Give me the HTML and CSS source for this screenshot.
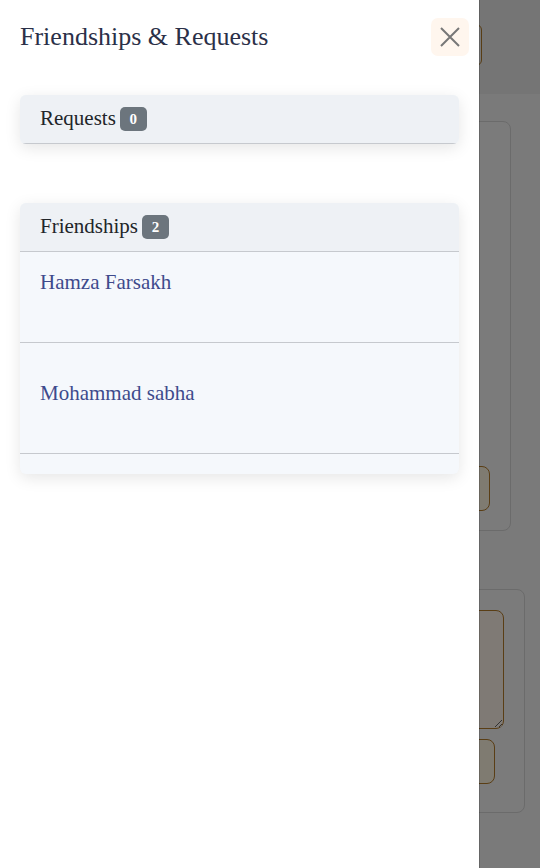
FILE: index.html
```html
<!DOCTYPE html>
<html lang="en">
<head>
<meta charset="utf-8">
<title>Friendships &amp; Requests</title>
<link rel="stylesheet" href="styles.css">
</head>
<body>
<div class="page">
  <header class="nav"><span class="nav-btn"></span></header>
  <main class="main">
    <section class="bg-card bg-card-one">
      <span class="bg-btn bg-btn-one"></span>
    </section>
    <section class="bg-card bg-card-two">
      <textarea class="bg-textarea" readonly></textarea>
      <span class="bg-btn bg-btn-two">Post</span>
    </section>
  </main>
</div>
<div class="backdrop"></div>
<aside class="offcanvas">
  <div class="oc-header">
    <h4 class="oc-title">Friendships &amp; Requests</h4>
    <button class="btn-close" type="button" aria-label="Close">
      <svg width="20" height="20" viewBox="0 0 20 20"><path d="M1 1 L19 19 M19 1 L1 19" stroke="#777" stroke-width="2" fill="none"/></svg>
    </button>
  </div>
  <div class="oc-body">
    <div class="card">
      <div class="card-header">Requests <span class="badge">0</span></div>
    </div>
    <div class="card card-friends">
      <div class="card-header">Friendships <span class="badge">2</span></div>
      <ul class="list">
        <li class="item"><a class="name" href="#">Hamza Farsakh</a></li>
        <li class="item item-tall"><a class="name" href="#">Mohammad sabha</a></li>
      </ul>
    </div>
  </div>
</aside>
</body>
</html>
```
FILE: styles.css
```css
html, body {
  margin: 0;
  padding: 0;
}
body {
  font-family: "Liberation Serif", "DejaVu Serif", serif;
  font-size: 21px;
  line-height: 1.5;
  background: #f4f4f4;
  color: #212529;
  overflow: hidden;
}

/* page behind the offcanvas */
.nav {
  height: 94px;
  box-sizing: border-box;
  background: #eaeaea;
  display: flex;
  justify-content: flex-end;
  padding: 24px 58px 0 0;
}
.nav-btn {
  width: 120px;
  height: 42px;
  box-sizing: border-box;
  border: 1.5px solid #b07a2a;
  border-radius: 6px;
  background: #ececec;
}
.main {
  display: flex;
  flex-direction: column;
  align-items: flex-end;
}
.bg-card {
  box-sizing: border-box;
  border: 1px solid #d6d6d6;
  border-radius: 8px;
  background: #f7f7f7;
  display: flex;
  flex-direction: column;
  padding: 20px;
}
.bg-card-one {
  margin: 27px 29px 0 0;
  width: 420px;
  height: 410px;
  justify-content: flex-end;
  align-items: flex-end;
  padding-bottom: 19px;
}
.bg-card-two {
  margin: 58px 15px 0 0;
  width: 440px;
  height: 224px;
  align-items: stretch;
}
.bg-btn {
  box-sizing: border-box;
  height: 45px;
  width: 110px;
  border: 1.5px solid #b47c2a;
  border-radius: 8px;
  background: #fff6e2;
  font-family: "Liberation Sans", sans-serif;
  font-size: 16px;
  line-height: 42px;
  text-align: right;
  padding-right: 16px;
  color: #333;
}
.bg-textarea {
  box-sizing: border-box;
  height: 119px;
  border: 1.5px solid #b47c2a;
  border-radius: 8px;
  background: #fff4ea;
  resize: vertical;
  margin: 0;
  font: inherit;
}
.bg-btn-two {
  align-self: flex-end;
  margin: 10px 9px 0 0;
}

.backdrop {
  position: fixed;
  inset: 0;
  background: rgba(0, 0, 0, 0.5);
}

/* offcanvas panel */
.offcanvas {
  position: fixed;
  top: 0;
  left: 0;
  bottom: 0;
  width: 480px;
  box-sizing: border-box;
  background: #fff;
  background-clip: padding-box;
  border-right: 1px solid rgba(0, 0, 0, 0.175);
}
.oc-header {
  display: flex;
  align-items: center;
  justify-content: space-between;
  padding: 18px 10px 0 20px;
  height: 38px;
}
.oc-title {
  margin: 0;
  font-size: 26px;
  font-weight: 400;
  line-height: 1.2;
  color: #2b3048;
}
.btn-close {
  width: 38px;
  height: 38px;
  border: 0;
  border-radius: 7px;
  background: #fff6ee;
  padding: 0;
  display: flex;
  align-items: center;
  justify-content: center;
}
.oc-body {
  padding: 39px 20px 20px;
}
.card {
  background: #f5f8fc;
  border-radius: 6px;
  overflow: hidden;
  box-shadow: 0 4px 16px rgba(0, 0, 0, 0.1);
}
.card + .card {
  margin-top: 59px;
}
.card-header {
  display: flex;
  align-items: center;
  gap: 4px;
  padding: 8px 20px;
  height: 32px;
  background: #eef1f5;
  border-bottom: 1px solid #c6c9ce;
  color: #212529;
}
.badge {
  display: inline-block;
  box-sizing: border-box;
  min-width: 27px;
  height: 24px;
  padding: 0 7px;
  border-radius: 5px;
  background: #6c757d;
  color: #fff;
  font-family: "Liberation Serif", serif;
  font-weight: 700;
  font-size: 15px;
  line-height: 24px;
  text-align: center;
}
.list {
  list-style: none;
  margin: 0;
  padding: 0 0 20px;
}
.item {
  box-sizing: border-box;
  height: 91px;
  padding: 15px 20px 0;
  border-bottom: 1px solid #c6c9ce;
}
.item-tall {
  height: 111px;
  padding-top: 35px;
}
.name {
  color: #3e4a8c;
  text-decoration: none;
}
```
